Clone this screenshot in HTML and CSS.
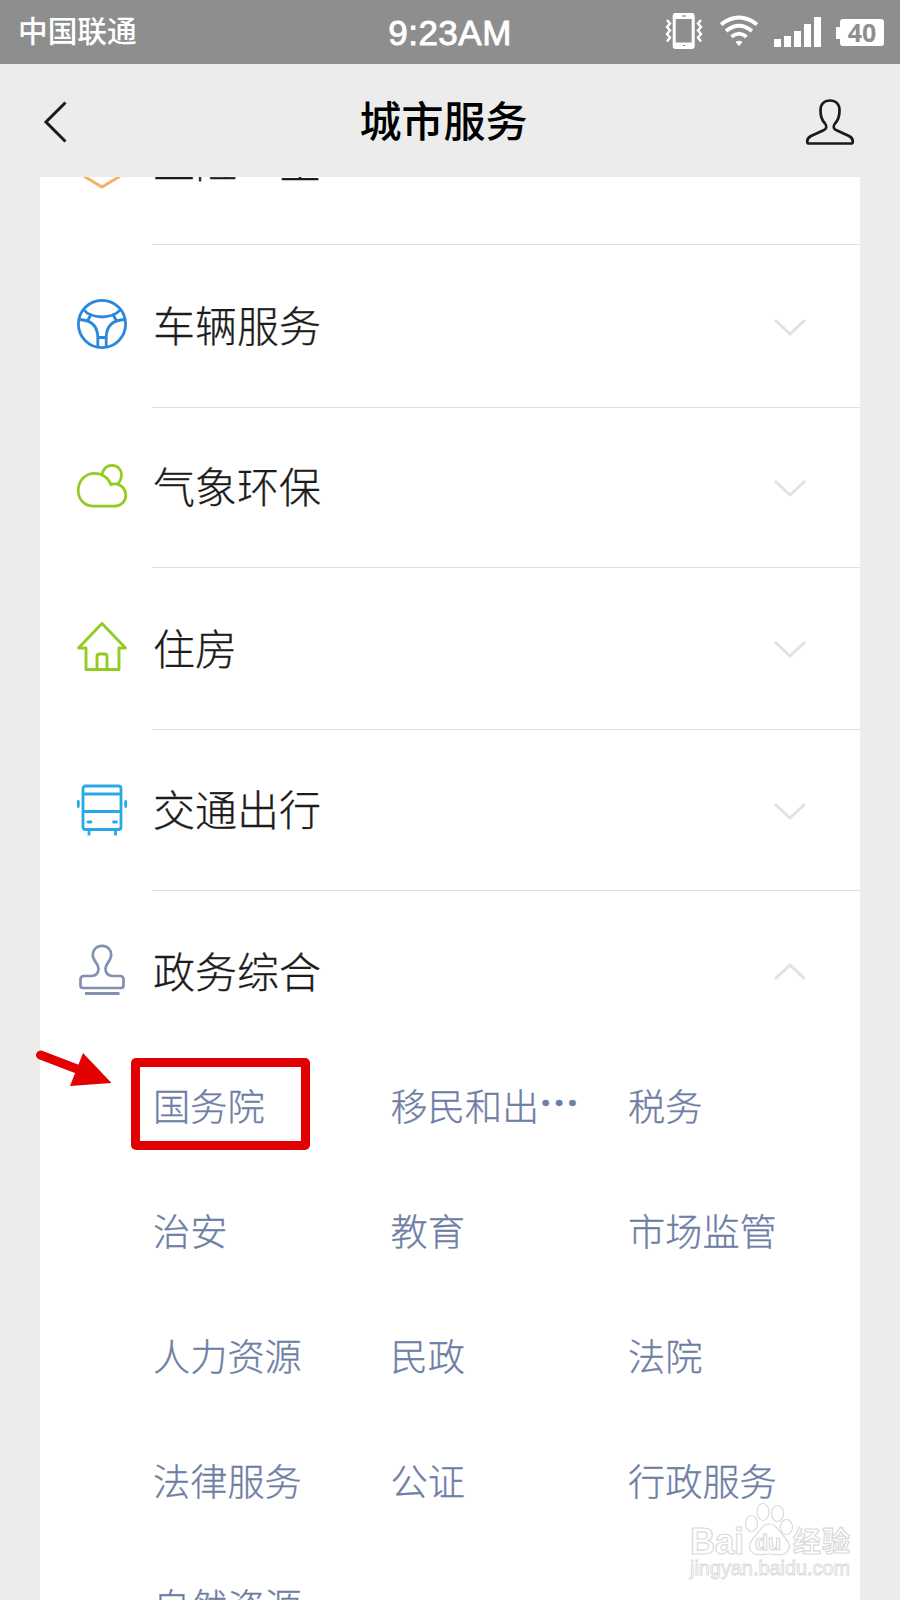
FILE: index.html
```html
<!DOCTYPE html>
<html lang="zh-CN">
<head>
<meta charset="utf-8">
<title>城市服务</title>
<link rel="stylesheet" href="styles.css">
</head>
<body>
<div class="screen">
  <header class="status">
    <span class="carrier">中国联通</span>
    <span class="time">9:23AM</span>
    <div class="indicators">
      <svg class="vibrate" width="38" height="36" viewBox="0 0 38 36">
        <rect x="9.2" y="1.4" width="19" height="33" rx="1.5" fill="none" stroke="#fff" stroke-width="3"/>
        <path d="M8 3.500h21M8 32h21" stroke="#fff" stroke-width="5"/>
        <path d="M17 3h4M18 32.500h2" stroke="#777" stroke-width="1"/>
        <path d="M2 7l3 3.500-3 3.500 3 3.500-3 3.500 3 3.500-3 4M36 7l-3 3.500 3 3.500-3 3.500 3 3.500-3 3.500 3 4" fill="none" stroke="#fff" stroke-width="2.400"/>
      </svg>
      <svg class="wifi" width="40" height="32" viewBox="0 0 40 32">
        <g fill="none" stroke="#fff" stroke-width="3.800">
          <path d="M2 9.500Q20-4.500 38 9.500"/><path d="M7 16Q20 5.500 33 16"/><path d="M12.500 21.700Q20 15.500 27.500 21.700"/>
        </g>
        <path d="M16.500 27Q20 24.500 23.500 27L20 31z" fill="#fff"/>
      </svg>
      <svg class="signal" width="48" height="31" viewBox="0 0 48 31">
        <path d="M0 23h7v8H0zM10 20h7v11h-7zM20 15h7v16h-7zM30 8h7v23h-7zM40 1h7v30h-7z" fill="#fff"/>
      </svg>
      <div class="battery">40</div>
    </div>
  </header>

  <nav class="nav">
    <svg class="back" width="26" height="44" viewBox="0 0 26 44"><path d="M22.500 2.500L3 22 22.500 41.500" fill="none" stroke="#1a1a1a" stroke-width="3"/></svg>
    <h1 class="title">城市服务</h1>
    <svg class="person" width="50" height="48" viewBox="0 0 50 48">
      <path d="M25 2.500C19 2.500 15.500 6.500 15.500 12.500C15.500 18 16.500 22 20 25.500C22.500 28.500 21.500 31 18 32.500L6 38Q2.200 40 2.200 43.500Q2.200 45.500 4 45.500H46Q47.800 45.500 47.800 43.500Q47.800 40 44 38L32 32.500C28.500 31 27.500 28.500 30 25.500C33.500 22 34.500 18 34.500 12.500C34.500 6.500 31 2.500 25 2.500Z" fill="none" stroke="#1a1a1a" stroke-width="2.700"/>
    </svg>
  </nav>

  <main class="card">
    <section class="row row-clipped">
      <svg class="icon" viewBox="0 0 52 52"><path d="M26 2L46 9V33Q46 38 42 40.500L26 50 10 40.500Q6 38 6 33V9Z" fill="none" stroke="#f5b06a" stroke-width="3"/></svg>
      <div class="row-body"><span>五险一金</span></div>
    </section>

    <section class="row row-vehicle">
      <svg class="icon" viewBox="0 0 52 52" fill="none" stroke="#2b87da" stroke-width="2.800">
        <circle cx="26" cy="26" r="23.600"/>
        <path d="M7.500 11.500Q13 18.500 26 19Q39 18.500 44.500 11.500M3 21.500C16 22 21.500 29 21.800 39V49M49 21.500C36 22 30.500 29 30.200 39V49M21.800 39.500h8.400M15.500 15.500l-3.700 7M36.500 15.500l3.700 7"/>
      </svg>
      <div class="row-body"><span>车辆服务</span><svg class="chev" viewBox="0 0 34 20"><path d="M2 3L17 17 32 3"/></svg></div>
    </section>

    <section class="row row-weather">
      <svg class="icon" viewBox="0 0 52 52" fill="none" stroke="#93cc20" stroke-width="2.700">
        <path d="M18 46.200C8.500 46.200 2.200 39.500 2.200 30.500C2.200 20.500 9.500 13.400 18.500 13.400C26.500 13.400 32.800 18.200 34.800 24.500Q36.500 23.700 39 23.900C45 24.200 49.800 29 49.800 35C49.800 41.500 45 46.200 38.500 46.200Z"/>
        <path d="M26 14.200C27.500 8.500 31 5.300 36 5.300C41.500 5.300 45.500 9.500 45.500 15C45.500 18.500 44 21.500 41.500 24"/>
      </svg>
      <div class="row-body"><span>气象环保</span><svg class="chev" viewBox="0 0 34 20"><path d="M2 3L17 17 32 3"/></svg></div>
    </section>

    <section class="row row-house">
      <svg class="icon" viewBox="0 0 52 52" fill="none" stroke="#93cc20" stroke-width="2.900" stroke-linejoin="round">
        <path d="M26 2.500L2.500 27H10V48.500H43V27H49.500ZM21 48V35.500Q21 33 23.500 33H28.500Q31 33 31 35.500V48"/>
      </svg>
      <div class="row-body"><span>住房</span><svg class="chev" viewBox="0 0 34 20"><path d="M2 3L17 17 32 3"/></svg></div>
    </section>

    <section class="row row-bus">
      <svg class="icon" viewBox="0 0 52 52" fill="none" stroke="#28a9e6" stroke-width="2.800">
        <rect x="7" y="3" width="38" height="43.500" rx="2.500"/>
        <path d="M7 11H45M7 28.500H45M13 46v6.500M39.500 46v6.500"/>
        <path d="M12 39h3M37.500 39h3M2.300 18.500v5M49.700 18.500v5" stroke-linecap="round"/>
      </svg>
      <div class="row-body"><span>交通出行</span><svg class="chev" viewBox="0 0 34 20"><path d="M2 3L17 17 32 3"/></svg></div>
    </section>

    <section class="row row-gov">
      <svg class="icon" viewBox="0 0 52 52" fill="none" stroke="#8290b2" stroke-width="2.700" stroke-linejoin="round">
        <path d="M26 2.800C20.500 2.800 16.800 6.700 16.800 12C16.800 18 22.500 20.500 22.500 25.500C22.500 30.500 19.500 33 15 33H8Q4.500 33 4.500 36.500V42.500Q4.500 45 7 45H45Q47.500 45 47.500 42.500V36.500Q47.500 33 44 33H37C32.500 33 29.500 30.500 29.500 25.500C29.500 20.500 35.200 18 35.200 12C35.200 6.700 31.500 2.800 26 2.800Z"/>
        <path d="M9 50.500H43.500" stroke-width="3"/>
      </svg>
      <div class="row-body"><span>政务综合</span><svg class="chev" viewBox="0 0 34 20"><path d="M2 17L17 3 32 17"/></svg></div>
    </section>

    <div class="grid">
      <a>国务院</a><a>移民和出<span class="dots">⋯</span></a><a>税务</a>
      <a>治安</a><a>教育</a><a>市场监管</a>
      <a>人力资源</a><a>民政</a><a>法院</a>
      <a>法律服务</a><a>公证</a><a>行政服务</a>
      <a>自然资源</a>
    </div>
  </main>

  <div class="highlight"></div>
  <svg class="arrow" width="80" height="40" viewBox="0 0 80 40">
    <path d="M5.500 7L46 22.500" stroke="#e20000" stroke-width="9" stroke-linecap="round"/>
    <path d="M48 5L76.500 35 35 38Z" fill="#e20000"/>
  </svg>
  <svg class="watermark" width="170" height="84" viewBox="0 0 170 84">
    <g fill="#fff" stroke="#dadada" stroke-width="1.200">
      <text class="wm-bold" x="5" y="56" font-size="36" textLength="54" lengthAdjust="spacingAndGlyphs">Bai</text>
      <ellipse cx="66.500" cy="25.500" rx="6" ry="8"/><ellipse cx="78" cy="14" rx="6" ry="8.500"/>
      <ellipse cx="92.500" cy="15.500" rx="6" ry="8"/><ellipse cx="101.500" cy="29" rx="6" ry="7.500"/>
      <path d="M84 26C91 26 94 33 98 37.500C103 43 106 47 103 52.500C99 59 91 56 84 56C77 56 69 59 65.500 52.500C63 47 66 43 70.500 37.500C75 33 77 26 84 26Z"/>
      <text class="wm-bold" x="70" y="52" font-size="22" textLength="26" lengthAdjust="spacingAndGlyphs">du</text>
      <text class="wm-cjk" x="108" y="54" font-size="28" textLength="57">经验</text>
      <text class="wm-url" x="5" y="77" font-size="20" stroke-width="0.900" textLength="160" lengthAdjust="spacingAndGlyphs">jingyan.baidu.com</text>
    </g>
  </svg>
</div>
</body>
</html>
```
FILE: styles.css
```css
* { box-sizing: border-box; }
body {
  margin: 0;
  background: #ececec;
  font-family: "Noto Sans CJK SC", "Noto Sans", sans-serif;
  font-weight: 300;
}
.screen {
  position: relative;
  width: 900px;
  height: 1600px;
  overflow: hidden;
  display: flex;
  flex-direction: column;
}
.status {
  flex: none;
  height: 64px;
  padding: 0 16px 0 18px;
  background: #8e8e8e;
  color: #fff;
  display: grid;
  grid-template-columns: 300px 1fr 300px;
  align-items: center;
}
.carrier { font-size: 29.700px; line-height: 60px; font-weight: 500; margin-top: -4px; }
.time {
  font-family: "Liberation Sans", Arial, sans-serif;
  font-size: 35px;
  font-weight: 400;
  letter-spacing: 0.500px;
  text-align: center;
  white-space: nowrap;
  -webkit-text-stroke: 0.900px #fff;
  padding-top: 1px;
  margin-left: -2px;
}
.indicators { display: flex; justify-content: flex-end; align-items: center; }
.vibrate { margin: -2px 16px 0 0; }
.wifi { margin: -2px 15px 0 0; }
.signal { margin-right: 18px; margin-top: -2px; }
.battery {
  position: relative;
  width: 44px;
  height: 27px;
  border-radius: 3px;
  background: #fff;
  color: #8e8e8e;
  font: bold 25px/26px "Noto Sans", sans-serif;
  text-align: center;
}
.battery::before {
  content: "";
  position: absolute;
  left: -4px;
  top: 8px;
  width: 5px;
  height: 12px;
  border-radius: 1px;
  background: #fff;
}
.nav {
  flex: none;
  height: 113px;
  padding: 0 45px 0 43px;
  display: flex;
  align-items: center;
  justify-content: space-between;
}
.back { margin: 3px 24px 0 0; }
.title { margin: -4px 0 0 -11px; font-size: 42px; line-height: 60px; font-weight: 500; color: #000; }
.person { margin-top: 2px; }
.card {
  flex: 1;
  min-height: 0;
  overflow: hidden;
  margin: 0 40px;
  background: #fff;
  display: flex;
  flex-direction: column;
}
.row {
  flex: none;
  height: 161px;
  padding-left: 36px;
  display: flex;
  align-items: center;
  gap: 24px;
}
.icon { flex: none; width: 52px; height: 52px; margin-top: -4px; overflow: visible; }
.row-body {
  flex: 1;
  height: 100%;
  padding-right: 53px;
  display: flex;
  align-items: center;
  justify-content: space-between;
  border-bottom: 1px solid #dfdfdf;
  font-size: 42px;
  line-height: 60px;
  color: #1c1c1c;
  -webkit-text-stroke: 0.300px #1c1c1c;
}
.row-body span { padding-left: 1px; margin-top: -4px; }
.chev { width: 34px; height: 20px; margin-top: 1px; fill: none; stroke: #e2e2e2; stroke-width: 3; }
.row-clipped { margin-top: -93px; }
.row-clipped .icon { margin-top: -3px; }
.row-clipped span { margin-top: -9px; }
.row-vehicle { height: 163px; }
.row-vehicle .icon { margin-top: -5px; }
.row-weather { height: 160px; }
.row-weather span { margin-top: -6px; }
.row-weather .chev { margin-top: 0; }
.row-house { height: 162px; }
.row-bus { height: 161px; }
.row-gov { height: 160px; }
.row-gov span { margin-top: -3px; }
.row-gov .chev { margin-top: 2px; }
.row-gov .row-body { border-bottom: 0; }
.grid {
  flex: none;
  margin-top: -1px;
  padding-left: 113px;
  display: grid;
  grid-template-columns: 237.500px 237.500px 1fr;
  grid-auto-rows: 110px;
  row-gap: 15px;
  font-size: 37.200px;
  line-height: 110px;
  color: #6e7ea5;
  -webkit-text-stroke: 0.300px #6e7ea5;
}
.grid a { white-space: nowrap; }
.dots { display: inline-block; line-height: 40px; font-weight: 700; letter-spacing: 1px; transform: translateY(-4px) scaleX(1.080); transform-origin: left; }
.highlight {
  position: absolute;
  left: 131px;
  top: 1058px;
  width: 179px;
  height: 92px;
  border: 9px solid #e20000;
  border-radius: 5px;
}
.arrow { position: absolute; left: 35px; top: 1048px; }
.watermark { position: absolute; left: 685px; top: 1498px; }
.wm-bold { font-family: "Liberation Sans", sans-serif; font-weight: 700; }
.wm-cjk { font-family: "Noto Sans CJK SC", sans-serif; font-weight: 700; }
.wm-url { font-family: "Liberation Sans", sans-serif; font-weight: 400; }
```
